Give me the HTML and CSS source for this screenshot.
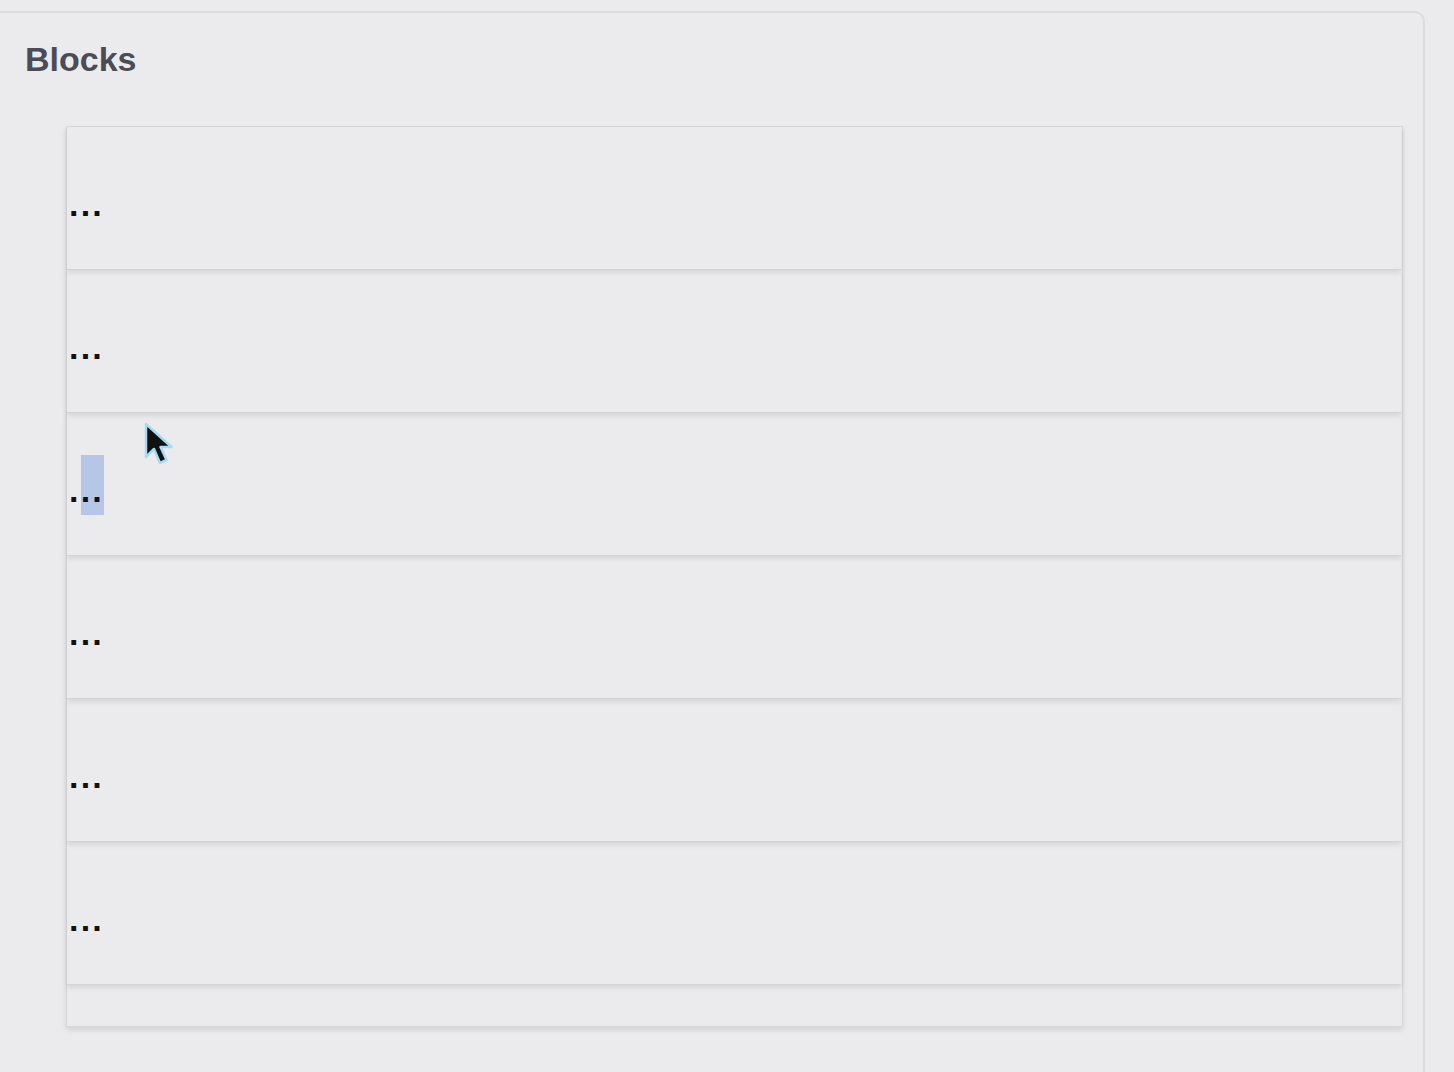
FILE: index.html
```html
<!DOCTYPE html>
<html>
<head>
    <title>Blocks</title>
    <link rel="stylesheet" href="styles.css">
</head>
<body>
    <div class="panel">
        <h2 class="panel-title">Blocks</h2>

        <div class="block-list">
            <div class="block-row"><span class="dots">...</span></div>
            <div class="block-row"><span class="dots">...</span></div>
            <div class="block-row"><span class="dots">.<span class="selected">..</span></span></div>
            <div class="block-row"><span class="dots">...</span></div>
            <div class="block-row"><span class="dots">...</span></div>
            <div class="block-row"><span class="dots">...</span></div>
            <div class="block-end"></div>
        </div>
    </div>

    <!-- mouse pointer over the list -->
    <svg class="pointer" width="34" height="48" viewBox="0 0 34 48">
        <path d="M3 2 L3 35 L11 27 L17 41 L23.5 38 L17.5 25 L28.5 25 Z"
              fill="#111" stroke="#a3dcf4" stroke-width="2.5" stroke-linejoin="round"/>
    </svg>
</body>
</html>
```

FILE: styles.css
```css
body {
    margin: 0;
    background: #ebebed;
    font-family: "Liberation Sans", Arial, sans-serif;
    overflow: hidden;
    height: 1072px;
}
.panel {
    margin-top: 11px;
    margin-left: -10px;
    width: 1435px;
    height: 1100px;
    box-sizing: border-box;
    border: 2px solid #dcdcde;
    border-radius: 0 10px 0 0;
    padding: 26px 0 0 33px;
    background: #ebebed;
}
.panel-title {
    margin: 0;
    font-size: 34px;
    line-height: 40px;
    font-weight: bold;
    color: #4c4c56;
}
.block-list {
    margin-top: 47px;
    margin-left: 41px;
    width: 1337px;
    box-sizing: border-box;
    border: 1px solid #d7d7d9;
    box-shadow: 0 3px 5px rgba(0, 0, 0, 0.10);
    background: #ebebed;
}
.block-row {
    height: 143px;
    box-sizing: border-box;
    padding: 42px 0 0 2px;
    margin-right: 1px;
    box-shadow: 0 3px 5px rgba(0, 0, 0, 0.09);
    border-bottom: 1px solid #d5d5d7;
    position: relative;
}
.block-end {
    height: 41px;
}
.dots {
    font-size: 34px;
    font-weight: bold;
    line-height: 70px;
    letter-spacing: 2.2px;
    color: #111;
}
.selected {
    display: inline-block;
    padding-top: 10px;
    line-height: 50px;
    background: #b6c6e6;
}
.pointer {
    position: absolute;
    left: 143px;
    top: 422px;
}
```
